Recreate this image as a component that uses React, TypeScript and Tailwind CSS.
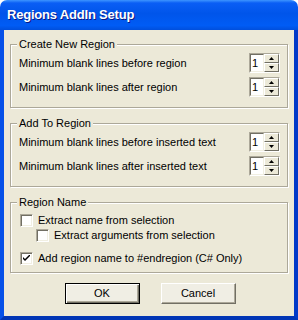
import React from 'react'

const font = { fontFamily: '"Liberation Sans", Arial, sans-serif' }

function Spinner({ value }: { value: number }) {
  return (
    <div className="flex h-[20px] w-[31px] shrink-0 border border-t-[#aca899] border-l-[#aca899] border-b-[#fff] border-r-[#fff] bg-white">
      <div className="flex flex-1 items-center border border-t-[#716f64] border-l-[#716f64] border-b-[#f1efe2] border-r-[#f1efe2] bg-white pl-[1px] text-[11px] leading-none text-black">
        {value}
      </div>
      <div className="flex w-[15px] flex-col">
        <SpinBtn up />
        <SpinBtn />
      </div>
    </div>
  )
}

function SpinBtn({ up }: { up?: boolean }) {
  return (
    <div className="flex flex-1 items-center justify-center border border-t-[#fff] border-l-[#fff] border-b-[#716f64] border-r-[#716f64] bg-[#ece9d8]">
      <svg width="5" height="3" viewBox="0 0 5 3">
        {up ? <polygon points="2.5,0 5,3 0,3" fill="#000" /> : <polygon points="0,0 5,0 2.5,3" fill="#000" />}
      </svg>
    </div>
  )
}

function Group({ title, children, className }: { title: string; children: React.ReactNode; className?: string }) {
  return (
    <fieldset
      className={
        'mx-[6px] border border-[#aca899] px-0 shadow-[inset_1px_1px_0_#fff,1px_1px_0_#fff] ' +
        (className ?? '')
      }
    >
      <legend className="ml-[6px] bg-[#ece9d8] px-[2px] text-[11px] leading-[13px] text-black">{title}</legend>
      {children}
    </fieldset>
  )
}

function SpinRow({ label }: { label: string }) {
  return (
    <div className="flex items-center justify-between pl-[8px] pr-[7px]">
      <span className="text-[11px] text-black">{label}</span>
      <Spinner value={1} />
    </div>
  )
}

function Check({ label, checked, indent }: { label: string; checked?: boolean; indent?: boolean }) {
  return (
    <div className={'flex items-center gap-[5px] ' + (indent ? 'pl-[25px]' : 'pl-[9px]')}>
      <div className="flex h-[13px] w-[13px] items-center justify-center border border-t-[#aca899] border-l-[#aca899] border-b-[#fff] border-r-[#fff] bg-white shadow-[inset_1px_1px_0_#716f64,inset_-1px_-1px_0_#f1efe2]">
        {checked && (
          <svg width="7" height="7" viewBox="0 0 7 7">
            <path d="M0 2 L0 4 L2 6 L7 1 L7 -1 L2 4 Z" fill="#000" />
          </svg>
        )}
      </div>
      <span className="text-[11px] leading-[13px] text-black">{label}</span>
    </div>
  )
}

export default function App() {
  return (
    <div className="flex h-[320px] w-[298px] flex-col bg-white" style={font}>
      <div className="flex h-[30px] shrink-0 items-center rounded-t-[7px] bg-[linear-gradient(to_bottom,#3d95ff_0%,#0a5ef5_10%,#0055ea_45%,#005cf5_85%,#004fdc_100%)] pl-[7px]">
        <span className="text-[13px] font-bold tracking-[-0.2px] text-white [text-shadow:1px_1px_0_#0a1883]">Regions AddIn Setup</span>
      </div>
      <div className="flex flex-1 flex-col border-x-4 border-b-4 border-l-[#0651e8] border-r-[#0139c8] border-b-[#0135b5] bg-[#ece9d8] pt-[8px]">
        <Group title="Create New Region" className="pb-[10px]">
          <div className="mt-[2px] flex flex-col gap-[4px]">
            <SpinRow label="Minimum blank lines before region" />
            <SpinRow label="Minimum blank lines after region" />
          </div>
        </Group>
        <Group title="Add To Region" className="mt-[9px] pb-[10px]">
          <div className="mt-[2px] flex flex-col gap-[4px]">
            <SpinRow label="Minimum blank lines before inserted text" />
            <SpinRow label="Minimum blank lines after inserted text" />
          </div>
        </Group>
        <Group title="Region Name" className="mt-[9px] pb-[7px]">
          <div className="mt-[5px] flex flex-col">
            <Check label="Extract name from selection" />
            <div className="mt-[2px]">
              <Check label="Extract arguments from selection" indent />
            </div>
            <div className="mt-[10px]">
              <Check label="Add region name to #endregion (C# Only)" checked />
            </div>
          </div>
        </Group>
        <div className="mt-[10px] flex justify-center gap-[21px] pl-[2px]">
          <button className="h-[21px] w-[75px] border border-black bg-[#f0eee4] text-[11px] text-black shadow-[inset_1px_1px_0_#fff,inset_-1px_-1px_0_#716f64,inset_-2px_-2px_0_#aca899]">
            OK
          </button>
          <button className="h-[21px] w-[75px] border border-t-[#fff] border-l-[#fff] border-b-[#716f64] border-r-[#716f64] bg-[#f0eee4] text-[11px] text-black shadow-[inset_-1px_-1px_0_#aca899]">
            Cancel
          </button>
        </div>
      </div>
    </div>
  )
}
